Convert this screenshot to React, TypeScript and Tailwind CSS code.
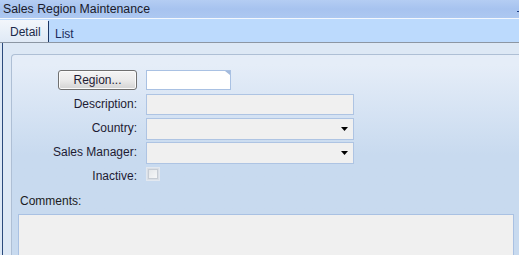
import React from "react";

function DropArrow() {
  return (
    <svg width="8" height="5" viewBox="0 0 8 5" className="absolute right-[4px] top-[8px]">
      <path d="M0 0 H7 L3.5 4 Z" fill="#000" />
    </svg>
  );
}

function Label({ text }: { text: string }) {
  return <div className="text-right leading-[21px] text-[#1e1b33]">{text}</div>;
}

export default function App() {
  return (
    <div className="w-[519px] h-[255px] overflow-hidden bg-[#dde8f5] font-['Liberation_Sans',Arial,sans-serif] text-[12px] text-[#1e1b33]">
      {/* caption */}
      <div className="relative h-[18px] bg-linear-to-b from-[#b4cdf3] via-[#a7c3ef] to-[#adc8f1] pl-[3px] text-[12.3px] leading-[18px] text-[#1a1a2a]">
        Sales Region Maintenance
        <div className="absolute right-0 top-[11px] w-[2px] h-px bg-[#1d3f82]" />
      </div>
      <div className="h-px bg-[#f3f7fd]" />

      {/* tabs */}
      <div className="flex h-[23px] bg-[#bcdafd]">
        <div className="flex w-[49px] items-end">
          <div className="h-[22px] w-[48px] bg-linear-to-b from-[#f2f6fb] to-[#e0eaf6] pl-[10px] pt-px leading-[22px] text-[#1b2a4a]">
            Detail
          </div>
          <div className="h-[21px] w-px bg-[#1d3764]" />
        </div>
        <div className="pl-[6px] pt-[4px] leading-[22px] text-[#1b2a5a]">List</div>
      </div>
      <div className="h-px bg-[#8c96a3]" />

      {/* body */}
      <div className="flex h-[212px]">
        <div className="w-[2px] bg-[#dde8f5]" />
        <div className="w-px bg-[#2b4a7c]" />
        <div className="flex-1 pl-[8px] pt-[11px]">
          <div className="h-full rounded-tl-[4px] border-l border-t border-[#aebfd5] bg-linear-to-b from-[#e5edf8] from-[5%] to-[#c8daef] to-[50%] pt-[15px]">
            <div className="grid grid-cols-[125px_auto] gap-x-[9px]">
              {/* Region */}
              <div className="flex justify-end">
                <button className="h-[20px] w-[79px] rounded-[3px] border border-[#707070] bg-linear-to-b from-[#f4f4f4] via-[#ebebeb] to-[#d3d3d3] leading-[18px] text-[#1e1b33] shadow-[inset_0_0_0_1px_#fbfbfb]">
                  Region...
                </button>
              </div>
              <div className="relative h-[20px] w-[85px] border border-[#a9c1e3] bg-white">
                <svg width="5" height="4" viewBox="0 0 5 4" className="absolute right-0 top-0">
                  <path d="M0 0 H5 V4 Z" fill="#a3badc" />
                </svg>
              </div>

              {/* Description */}
              <div className="mt-[4px]"><Label text="Description:" /></div>
              <div className="mt-[4px] h-[21px] w-[208px] border border-[#aec4e3] bg-[#f0f0f0]" />

              {/* Country */}
              <div className="mt-[3px]"><Label text="Country:" /></div>
              <div className="relative mt-[3px] h-[22px] w-[208px] border border-[#aec4e3] bg-[#f0f0f0]">
                <DropArrow />
              </div>

              {/* Sales Manager */}
              <div className="mt-[2px]"><Label text="Sales Manager:" /></div>
              <div className="relative mt-[2px] h-[22px] w-[208px] border border-[#aec4e3] bg-[#f0f0f0]">
                <DropArrow />
              </div>

              {/* Inactive */}
              <div className="mt-[2px]"><Label text="Inactive:" /></div>
              <div className="mt-[3px] flex h-[14px] w-[14px] items-center justify-center border border-[#e2e8f0] bg-[#d9dee5]">
                <div className="h-[10px] w-[10px] border border-[#c6ccd4] bg-linear-to-br from-[#e4e7ea] to-[#f6f7f8]" />
              </div>
            </div>

            <div className="ml-[8px] mt-[7px] leading-[14px] text-[#1b1a22]">Comments:</div>
            <div className="ml-[6px] mt-[6px] h-[60px] w-[496px] border border-[#a9c1e3] bg-[#f0f0f0]" />
          </div>
        </div>
      </div>
    </div>
  );
}
